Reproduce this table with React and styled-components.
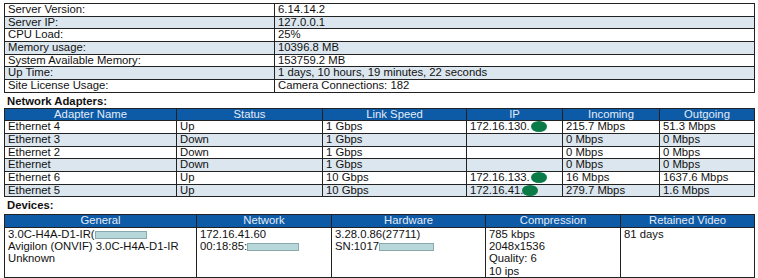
import React from "react";
import styled, { createGlobalStyle } from "styled-components";

const Global = createGlobalStyle`
  html, body { margin: 0; padding: 0; background: #fff; }
  body { font-family: "Liberation Sans", Arial, sans-serif; font-size: 11.3px; color: #111; }
`;

const Page = styled.div`
  padding: 3px 4px 0 4px;
  width: 750px;
`;

const Table = styled.table`
  width: 750px;
  table-layout: fixed;
  border-collapse: collapse;
  border: 1.5px solid #222;
`;

const Col = styled.col`
  width: ${(p) => p.$w}px;
`;

const Row = styled.tr`
  background: ${(p) => (p.$alt ? "#dbe6ee" : "#ffffff")};
`;

const Cell = styled.td`
  border: 1px solid #222;
  padding: 0 3px;
  line-height: ${(p) => (p.$tall ? "12.3px" : "11.65px")};
  vertical-align: top;
  white-space: nowrap;
  overflow: hidden;
`;

const Head = styled.th`
  background: #0d5aa7;
  color: #e3ecf6;
  font-weight: normal;
  border: 1px solid #222;
  padding: 0 3px;
  line-height: 11.65px;
  text-align: center;
`;

const Section = styled.div`
  font-weight: bold;
  padding: 2px 0 0 3px;
  line-height: 13px;
  height: ${(p) => p.$h}px;
`;

const Blob = styled.span`
  display: inline-block;
  width: 16px;
  height: 11px;
  border-radius: 50%;
  background: #0a7a46;
  vertical-align: -2px;
  margin-left: ${(p) => p.$ml || 0}px;
`;

const Redact = styled.span`
  display: inline-block;
  width: ${(p) => p.$w}px;
  height: 6px;
  background: #b8d7da;
  border: 1px solid #8aa9ab;
  vertical-align: -1px;
`;

const Line = styled.div``;

const info = [
  ["Server Version:", "6.14.14.2"],
  ["Server IP:", "127.0.0.1"],
  ["CPU Load:", "25%"],
  ["Memory usage:", "10396.8 MB"],
  ["System Available Memory:", "153759.2 MB"],
  ["Up Time:", "1 days, 10 hours, 19 minutes, 22 seconds"],
  ["Site License Usage:", "Camera Connections: 182"],
];

const adapters = [
  ["Ethernet 4", "Up", "1 Gbps", "172.16.130.", "215.7 Mbps", "51.3 Mbps"],
  ["Ethernet 3", "Down", "1 Gbps", "", "0 Mbps", "0 Mbps"],
  ["Ethernet 2", "Down", "1 Gbps", "", "0 Mbps", "0 Mbps"],
  ["Ethernet", "Down", "1 Gbps", "", "0 Mbps", "0 Mbps"],
  ["Ethernet 6", "Up", "10 Gbps", "172.16.133.", "16 Mbps", "1637.6 Mbps"],
  ["Ethernet 5", "Up", "10 Gbps", "172.16.41.", "279.7 Mbps", "1.6 Mbps"],
];

export default function App() {
  return (
    <Page>
      <Global />
      <Table>
        <colgroup>
          <Col $w={270} />
          <Col $w={480} />
        </colgroup>
        <tbody>
          {info.map(([k, v], i) => (
            <Row key={k} $alt={i % 2 === 1}>
              <Cell>{k}</Cell>
              <Cell>{v}</Cell>
            </Row>
          ))}
        </tbody>
      </Table>
      <Section $h={13}>Network Adapters:</Section>
      <Table>
        <colgroup>
          {[172, 146, 144, 96, 97, 95].map((w, i) => (
            <Col key={i} $w={w} />
          ))}
        </colgroup>
        <thead>
          <tr>
            {["Adapter Name", "Status", "Link Speed", "IP", "Incoming", "Outgoing"].map((h) => (
              <Head key={h}>{h}</Head>
            ))}
          </tr>
        </thead>
        <tbody>
          {adapters.map((a, i) => (
            <Row key={a[0]} $alt={i % 2 === 1}>
              <Cell>{a[0]}</Cell>
              <Cell>{a[1]}</Cell>
              <Cell>{a[2]}</Cell>
              <Cell>
                {a[3]}
                {a[3] && <Blob $ml={i === 5 ? -1 : 1} />}
              </Cell>
              <Cell>{a[4]}</Cell>
              <Cell>{a[5]}</Cell>
            </Row>
          ))}
        </tbody>
      </Table>
      <Section $h={15}>Devices:</Section>
      <Table>
        <colgroup>
          {[192, 135, 154, 135, 134].map((w, i) => (
            <Col key={i} $w={w} />
          ))}
        </colgroup>
        <thead>
          <tr>
            {["General", "Network", "Hardware", "Compression", "Retained Video"].map((h) => (
              <Head key={h}>{h}</Head>
            ))}
          </tr>
        </thead>
        <tbody>
          <Row>
            <Cell $tall>
              <Line>
                3.0C-H4A-D1-IR(<Redact $w={50} />
              </Line>
              <Line>Avigilon (ONVIF) 3.0C-H4A-D1-IR</Line>
              <Line>Unknown</Line>
            </Cell>
            <Cell $tall>
              <Line>172.16.41.60</Line>
              <Line>
                00:18:85:<Redact $w={50} />
              </Line>
            </Cell>
            <Cell $tall>
              <Line>3.28.0.86(27711)</Line>
              <Line>
                SN:1017<Redact $w={53} />
              </Line>
            </Cell>
            <Cell $tall>
              <Line>785 kbps</Line>
              <Line>2048x1536</Line>
              <Line>Quality: 6</Line>
              <Line>10 ips</Line>
            </Cell>
            <Cell $tall>
              <Line>81 days</Line>
            </Cell>
          </Row>
        </tbody>
      </Table>
    </Page>
  );
}
